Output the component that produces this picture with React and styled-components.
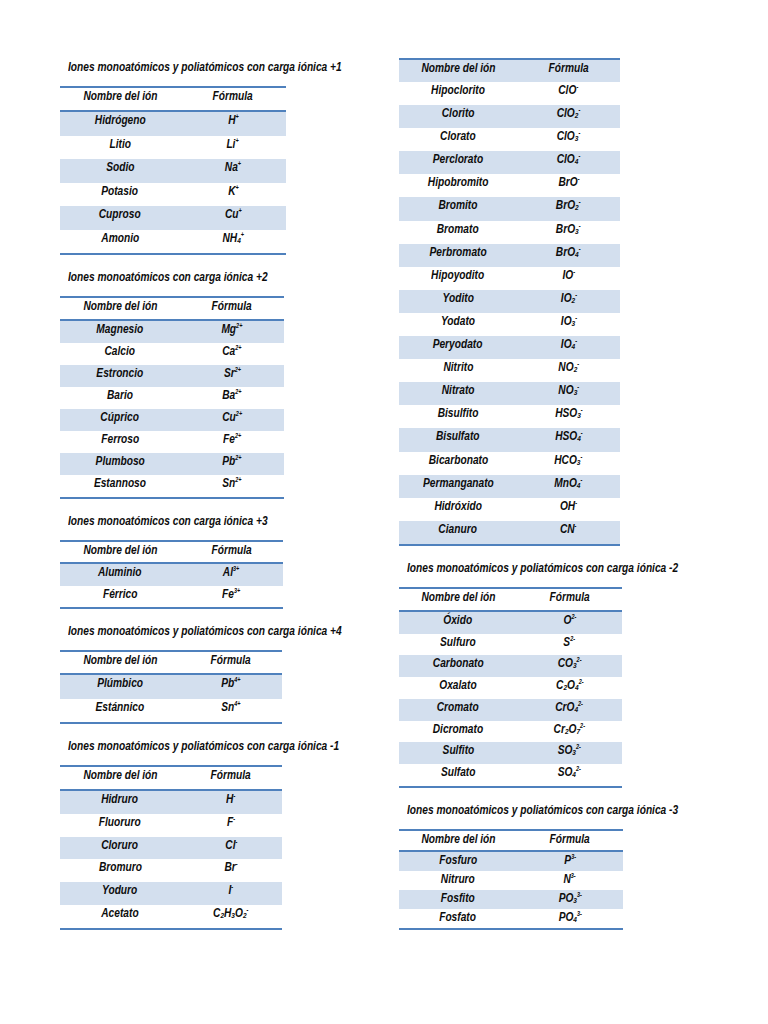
import React from "react";
import styled, { createGlobalStyle } from "styled-components";

const BLUE_LINE = "#4f81bd";
const BAND = "#d3dfee";
const FONT = `"Liberation Sans", Arial, sans-serif`;

const GlobalStyle = createGlobalStyle`
  html, body { margin: 0; padding: 0; background: #ffffff; }
  body { font-family: ${FONT}; color: #0d0d0d; }
`;

const Page = styled.div`
  width: 768px;
  min-height: 1024px;
  box-sizing: border-box;
  padding: 58px 0 0 60px;
  display: grid;
  grid-template-columns: 226px 224px;
  column-gap: 113px;
  align-items: start;
`;

const Column = styled.div`
  display: flex;
  flex-direction: column;
  gap: 13px;
`;

const Section = styled.section`
  width: ${(p) => p.$width}px;
`;

const Title = styled.h2`
  margin: 0 0 12px 0;
  padding: 2px 0 0 8px;
  font-family: ${FONT};
  font-style: italic;
  font-weight: bold;
  font-size: 12.5px;
  line-height: 14px;
  white-space: nowrap;
  color: #0d0d0d;
`;

/* The source uses a narrow face (Arial Narrow); condense Liberation Sans to its width */
const Narrow = styled.span`
  display: inline-block;
  transform: scaleX(0.815);
  transform-origin: ${(p) => (p.$left ? "left center" : "center center")};
  white-space: nowrap;
`;

const Table = styled.div`
  border-top: 2px solid ${BLUE_LINE};
  border-bottom: 2px solid ${BLUE_LINE};
`;

const Row = styled.div`
  display: grid;
  grid-template-columns: ${(p) => p.$col}px 1fr;
  height: ${(p) => p.$h}px;
  background: ${(p) => (p.$band ? BAND : "transparent")};
  border-bottom: ${(p) => (p.$rule ? `2px solid ${BLUE_LINE}` : "none")};
`;

const Cell = styled.div`
  padding-top: 1px;
  text-align: center;
  font-family: ${FONT};
  font-style: italic;
  font-weight: bold;
  font-size: 12.5px;
  line-height: 14px;
  white-space: nowrap;
  color: #0d0d0d;
`;

const Sub = styled.span`
  font-size: 0.64em;
  vertical-align: -0.12em;
  line-height: 0;
`;

const Sup = styled.span`
  font-size: 0.54em;
  vertical-align: 0.8em;
  line-height: 0;
`;

function Formula({ f }) {
  const parts = f.split(/(\{[^}]*\}|\[[^\]]*\])/).filter(Boolean);
  return (
    <>
      {parts.map((p, i) => {
        if (p[0] === "{") return <Sub key={i}>{p.slice(1, -1)}</Sub>;
        if (p[0] === "[") return <Sup key={i}>{p.slice(1, -1)}</Sup>;
        return <React.Fragment key={i}>{p}</React.Fragment>;
      })}
    </>
  );
}

function IonTable({ title, rows, width, col = 120, headH, rowH, headerBand = false, headerRule = true }) {
  return (
    <Section $width={width}>
      {title && (
        <Title>
          <Narrow $left>{title}</Narrow>
        </Title>
      )}
      <Table>
        <Row $col={col} $h={headH} $band={headerBand} $rule={headerRule}>
          <Cell>
            <Narrow>Nombre del ión</Narrow>
          </Cell>
          <Cell>
            <Narrow>Fórmula</Narrow>
          </Cell>
        </Row>
        {rows.map(([name, f], i) => (
          <Row key={name} $col={col} $h={rowH} $band={headerBand ? i % 2 === 1 : i % 2 === 0}>
            <Cell>
              <Narrow>{name}</Narrow>
            </Cell>
            <Cell>
              <Narrow>
                <Formula f={f} />
              </Narrow>
            </Cell>
          </Row>
        ))}
      </Table>
    </Section>
  );
}

const T1 = [
  ["Hidrógeno", "H[+]"],
  ["Litio", "Li[+]"],
  ["Sodio", "Na[+]"],
  ["Potasio", "K[+]"],
  ["Cuproso", "Cu[+]"],
  ["Amonio", "NH{4}[+]"],
];
const T2 = [
  ["Magnesio", "Mg[2+]"],
  ["Calcio", "Ca[2+]"],
  ["Estroncio", "Sr[2+]"],
  ["Bario", "Ba[2+]"],
  ["Cúprico", "Cu[2+]"],
  ["Ferroso", "Fe[2+]"],
  ["Plumboso", "Pb[2+]"],
  ["Estannoso", "Sn[2+]"],
];
const T3 = [
  ["Aluminio", "Al[3+]"],
  ["Férrico", "Fe[3+]"],
];
const T4 = [
  ["Plúmbico", "Pb[4+]"],
  ["Estánnico", "Sn[4+]"],
];
const T5 = [
  ["Hidruro", "H[-]"],
  ["Fluoruro", "F[-]"],
  ["Cloruro", "Cl[-]"],
  ["Bromuro", "Br[-]"],
  ["Yoduro", "I[-]"],
  ["Acetato", "C{2}H{3}O{2}[-]"],
];
const T6 = [
  ["Hipoclorito", "ClO[-]"],
  ["Clorito", "ClO{2}[-]"],
  ["Clorato", "ClO{3}[-]"],
  ["Perclorato", "ClO{4}[-]"],
  ["Hipobromito", "BrO[-]"],
  ["Bromito", "BrO{2}[-]"],
  ["Bromato", "BrO{3}[-]"],
  ["Perbromato", "BrO{4}[-]"],
  ["Hipoyodito", "IO[-]"],
  ["Yodito", "IO{2}[-]"],
  ["Yodato", "IO{3}[-]"],
  ["Peryodato", "IO{4}[-]"],
  ["Nitrito", "NO{2}[-]"],
  ["Nitrato", "NO{3}[-]"],
  ["Bisulfito", "HSO{3}[-]"],
  ["Bisulfato", "HSO{4}[-]"],
  ["Bicarbonato", "HCO{3}[-]"],
  ["Permanganato", "MnO{4}[-]"],
  ["Hidróxido", "OH[-]"],
  ["Cianuro", "CN[-]"],
];
const T7 = [
  ["Óxido", "O[2-]"],
  ["Sulfuro", "S[2-]"],
  ["Carbonato", "CO{3}[2-]"],
  ["Oxalato", "C{2}O{4}[2-]"],
  ["Cromato", "CrO{4}[2-]"],
  ["Dicromato", "Cr{2}O{7}[2-]"],
  ["Sulfito", "SO{3}[2-]"],
  ["Sulfato", "SO{4}[2-]"],
];
const T8 = [
  ["Fosfuro", "P[3-]"],
  ["Nitruro", "N[3-]"],
  ["Fosfito", "PO{3}[3-]"],
  ["Fosfato", "PO{4}[3-]"],
];

export default function App() {
  return (
    <>
      <GlobalStyle />
      <Page>
        <Column>
          <IonTable
            title="Iones monoatómicos y poliatómicos con carga iónica +1"
            rows={T1}
            width={226}
            headH={22}
            rowH={23.5}
          />
          <IonTable title="Iones monoatómicos con carga iónica +2" rows={T2} width={224} headH={21} rowH={22} />
          <IonTable title="Iones monoatómicos con carga iónica +3" rows={T3} width={223} headH={20} rowH={21.5} />
          <IonTable
            title="Iones monoatómicos y poliatómicos con carga iónica +4"
            rows={T4}
            width={222}
            headH={21}
            rowH={23.5}
          />
          <IonTable
            title="Iones monoatómicos y poliatómicos con carga iónica -1"
            rows={T5}
            width={222}
            headH={22}
            rowH={22.83}
          />
        </Column>
        <Column>
          <IonTable rows={T6} width={221} col={118} headH={22} rowH={23.1} headerBand headerRule={false} />
          <IonTable
            title="Iones monoatómicos y poliatómicos con carga iónica -2"
            rows={T7}
            width={223}
            col={118}
            headH={21}
            rowH={21.75}
          />
          <IonTable
            title="Iones monoatómicos y poliatómicos con carga iónica -3"
            rows={T8}
            width={224}
            col={118}
            headH={19}
            rowH={19}
          />
        </Column>
      </Page>
    </>
  );
}
